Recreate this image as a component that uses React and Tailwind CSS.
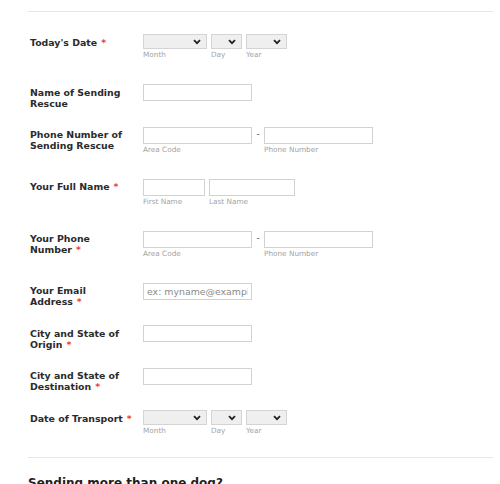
import React from 'react';

const font = { fontFamily: '"DejaVu Sans", Verdana, sans-serif' };

const Star = () => <span className="ml-[4px] text-[#f23a3c]">*</span>;

const Chevron = () => (
  <svg width="8" height="6" viewBox="0 0 8 6" className="mr-[5px]">
    <path d="M1 1.2 L4 4.2 L7 1.2" fill="none" stroke="#222" strokeWidth="1.8" />
  </svg>
);

const Sub = ({ children }) => (
  <div className="mt-[1px] mb-[6px] text-[7.3px] leading-[10px] text-[#a3a3a3] whitespace-nowrap">{children}</div>
);

const Select = ({ w, label }) => (
  <div className="flex flex-col">
    <div className={`${w} h-[15px] bg-[#efefef] border border-[#d4d4d4] flex items-center justify-end`}>
      <Chevron />
    </div>
    <Sub>{label}</Sub>
  </div>
);

const TextBox = ({ w, placeholder }) => (
  <input
    placeholder={placeholder}
    className={`${w} h-[17px] bg-white border border-[#d2d2d2] px-[3px] text-[9.4px] text-[#333] placeholder:text-[#8a8a8a] outline-none`}
    style={font}
  />
);

const Label = ({ children }) => (
  <div className="w-[115px] shrink-0 pl-[2px] pt-[2.5px] text-[9.4px] leading-[11px] font-bold text-[#2b2b2b] whitespace-nowrap">
    {children}
  </div>
);

const Row = ({ label, children }) => (
  <div className="flex py-[9px]">
    <Label>{label}</Label>
    <div className="flex items-start">{children}</div>
  </div>
);

const DateFields = () => (
  <div className="flex gap-[4px]">
    <Select w="w-[64px]" label="Month" />
    <Select w="w-[31px]" label="Day" />
    <Select w="w-[41px]" label="Year" />
  </div>
);

const PhoneFields = () => (
  <div className="flex">
    <div className="flex flex-col">
      <TextBox w="w-[109px]" />
      <Sub>Area Code</Sub>
    </div>
    <div className="w-[12px] h-[17px] flex items-center justify-center text-[9px] text-[#555]">-</div>
    <div className="flex flex-col">
      <TextBox w="w-[109px]" />
      <Sub>Phone Number</Sub>
    </div>
  </div>
);

export default function App() {
  return (
    <div className="w-[500px] h-[484px] overflow-hidden bg-white pt-[11px]" style={font}>
      <div className="ml-[28px] w-[465px]">
        <div className="h-px bg-[#e6e6e6]" />
        <div className="pt-[13px]">
          <Row label={<>Today's Date<Star /></>}>
            <DateFields />
          </Row>
          <Row label={<>Name of Sending<br />Rescue</>}>
            <TextBox w="w-[109px]" />
          </Row>
          <Row label={<>Phone Number of<br />Sending Rescue</>}>
            <PhoneFields />
          </Row>
          <Row label={<>Your Full Name<Star /></>}>
            <div className="flex gap-[4px]">
              <div className="flex flex-col">
                <TextBox w="w-[62px]" />
                <Sub>First Name</Sub>
              </div>
              <div className="flex flex-col">
                <TextBox w="w-[86px]" />
                <Sub>Last Name</Sub>
              </div>
            </div>
          </Row>
          <Row label={<>Your Phone<br />Number<Star /></>}>
            <PhoneFields />
          </Row>
          <Row label={<>Your Email<br />Address<Star /></>}>
            <TextBox w="w-[109px]" placeholder="ex: myname@example.com" />
          </Row>
          <Row label={<>City and State of<br />Origin<Star /></>}>
            <TextBox w="w-[109px]" />
          </Row>
          <Row label={<>City and State of<br />Destination<Star /></>}>
            <TextBox w="w-[109px]" />
          </Row>
          <Row label={<>Date of Transport<Star /></>}>
            <DateFields />
          </Row>
        </div>
        <div className="mt-[6px] h-px bg-[#e6e6e6]" />
        <div className="mt-[18px] text-[12px] leading-[14px] font-bold text-[#1f1f1f] whitespace-nowrap">
          Sending more than one dog?
        </div>
      </div>
    </div>
  );
}
